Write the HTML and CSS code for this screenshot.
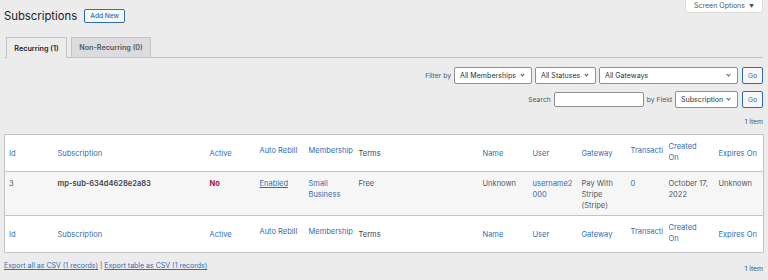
FILE: index.html
```html
<!DOCTYPE html>
<html>
<head>
<meta charset="utf-8">
<link rel="stylesheet" href="styles.css">
</head>
<body>
<div class="wrap">
  <div class="screen-opts">Screen Options <span class="caret">▼</span></div>
  <div class="title-row">
    <h1 class="title">Subscriptions</h1>
    <a class="add-new">Add New</a>
  </div>
  <div class="tabs">
    <a class="tab active">Recurring (1)</a>
    <a class="tab">Non-Recurring (0)</a>
  </div>
  <div class="filters">
    <div class="frow">
      <span class="lbl">Filter by</span>
      <div class="sel w-mem">All Memberships<span class="chev"></span></div>
      <div class="sel w-stat">All Statuses<span class="chev"></span></div>
      <div class="sel w-gw">All Gateways<span class="chev"></span></div>
      <a class="go">Go</a>
    </div>
    <div class="frow">
      <span class="lbl">Search</span>
      <div class="inp"></div>
      <span class="lbl">by Field</span>
      <div class="sel w-field">Subscription<span class="chev"></span></div>
      <a class="go">Go</a>
    </div>
  </div>
  <div class="count">1 item</div>
  <table class="list">
    <colgroup>
      <col class="c-id"><col class="c-sub"><col class="c-act"><col class="c-ar"><col class="c-mem"><col class="c-terms"><col class="c-name"><col class="c-user"><col class="c-gw"><col class="c-tx"><col class="c-cr"><col class="c-ex">
    </colgroup>
    <thead>
      <tr>
        <th><a>Id</a></th>
        <th><a>Subscription</a></th>
        <th><a>Active</a></th>
        <th class="hi"><a>Auto Rebill</a></th>
        <th class="hi"><a>Membership</a></th>
        <th class="plain">Terms</th>
        <th><a>Name</a></th>
        <th><a>User</a></th>
        <th><a>Gateway</a></th>
        <th class="hi clip"><a>Transacti</a></th>
        <th class="two"><a>Created On</a></th>
        <th><a>Expires On</a></th>
      </tr>
    </thead>
    <tbody>
      <tr>
        <td>3</td>
        <td class="subid">mp-sub-634d4628e2a83</td>
        <td class="no">No</td>
        <td><a class="ul">Enabled</a></td>
        <td><a>Small Business</a></td>
        <td>Free</td>
        <td>Unknown</td>
        <td class="brk"><a>username2000</a></td>
        <td>Pay With Stripe (Stripe)</td>
        <td><a>0</a></td>
        <td>October 17, 2022</td>
        <td>Unknown</td>
      </tr>
    </tbody>
    <tfoot>
      <tr>
        <th><a>Id</a></th>
        <th><a>Subscription</a></th>
        <th><a>Active</a></th>
        <th class="hi"><a>Auto Rebill</a></th>
        <th class="hi"><a>Membership</a></th>
        <th class="plain">Terms</th>
        <th><a>Name</a></th>
        <th><a>User</a></th>
        <th><a>Gateway</a></th>
        <th class="hi clip"><a>Transacti</a></th>
        <th class="two"><a>Created On</a></th>
        <th><a>Expires On</a></th>
      </tr>
    </tfoot>
  </table>
  <div class="bottom">
    <div class="exports"><a>Export all as CSV (1 records)</a> | <a>Export table as CSV (1 records)</a></div>
    <div class="count2">1 item</div>
  </div>
</div>
</body>
</html>
```
FILE: styles.css
```css
* { box-sizing: border-box; }
html, body { margin: 0; padding: 0; }
body {
  background: #ececec;
  font-family: "Inter", "Liberation Sans", sans-serif;
  font-size: 7.5px;
  color: #50575e;
  width: 768px;
  height: 280px;
  overflow: hidden;
}
a { color: #2f6db3; text-decoration: none; }
.wrap { position: relative; padding: 0 5px 0 4px; }
.screen-opts {
  position: absolute;
  right: 5px;
  top: -2px;
  width: 78px;
  height: 15px;
  background: #fff;
  border: 1px solid #dcdcde;
  border-top: none;
  border-radius: 0 0 3px 3px;
  color: #50575e;
  font-size: 7px;
  display: flex;
  align-items: center;
  justify-content: center;
  padding-top: 1px;
  gap: 4px;
}
.screen-opts .caret { font-size: 5px; color: #50575e; }
.title-row { display: flex; align-items: center; height: 31px; padding-top: 1px; }
.title {
  margin: 0;
  font-size: 11.3px;
  font-weight: 400;
  color: #1d2327;
}
.add-new {
  margin-left: 7px;
  border: 1px solid #2f6db3;
  border-radius: 2px;
  background: #f6f7f7;
  font-size: 6.6px;
  font-weight: 500;
  height: 14px;
  width: 41px;
  display: flex;
  align-items: center;
  justify-content: center;
}
.tabs {
  display: flex;
  gap: 4px;
  padding-left: 2px;
  margin-top: 6px;
  border-bottom: 1px solid #c3c4c7;
  height: 21px;
}
.tab {
  border: 1px solid #c3c4c7;
  border-bottom: none;
  background: #dcdcde;
  color: #50575e;
  font-weight: 600;
  font-size: 7.2px;
  display: flex;
  align-items: center;
  justify-content: center;
  white-space: nowrap;
  height: 20px;
}
.tab.active {
  background: #ececec;
  color: #1d2327;
  height: 21px;
  margin-bottom: -1px;
  width: 61px;
}
.tab:not(.active) { width: 80px; }
.filters { display: flex; flex-direction: column; align-items: flex-end; gap: 7px; margin-top: 9px; }
.frow { display: flex; align-items: center; gap: 3px; }
.lbl { color: #50575e; font-size: 6.8px; }
.sel {
  height: 17px;
  background: #fff;
  border: 1px solid #8c8f94;
  border-radius: 2px;
  color: #2c3338;
  font-size: 7.1px;
  display: flex;
  align-items: center;
  padding-left: 5px;
  position: relative;
  white-space: nowrap;
}
.chev {
  position: absolute;
  right: 7px;
  top: 5px;
  width: 3px;
  height: 3px;
  border-right: 1px solid #50575e;
  border-bottom: 1px solid #50575e;
  transform: rotate(45deg);
}
.w-mem { width: 78px; }
.w-stat { width: 61px; }
.w-gw { width: 139px; }
.w-field { width: 63px; }
.inp { width: 90px; height: 15px; background: #fff; border: 1px solid #8c8f94; border-radius: 2px; }
.go {
  width: 21px;
  height: 17px;
  border: 1px solid #2f6db3;
  border-radius: 2px;
  background: #f6f7f7;
  display: flex;
  align-items: center;
  justify-content: center;
  font-size: 6.8px;
  margin-left: 1px;
}
.count { text-align: right; font-size: 6.8px; margin-top: 9px; height: 17px; color: #50575e; }
.list {
  width: 759px;
  border-collapse: collapse;
  table-layout: fixed;
  background: #fff;
  border: 1px solid #c3c4c7;
}
.c-id { width: 49px; } .c-sub { width: 152px; } .c-act { width: 50px; } .c-ar { width: 49px; }
.c-mem { width: 50px; } .c-terms { width: 124px; } .c-name { width: 50px; } .c-user { width: 49px; }
.c-gw { width: 49px; } .c-tx { width: 38px; } .c-cr { width: 50px; } .c-ex { width: 49px; }
th {
  text-align: left;
  font-weight: 400;
  font-size: 7.5px;
  height: 37px;
  padding: 0 4px;
  vertical-align: middle;
  white-space: nowrap;
  line-height: 11px;
}
thead th { border-bottom: 1px solid #c3c4c7; }
tfoot th { border-top: 1px solid #c3c4c7; height: 37px; }
th.hi a { position: relative; top: -3px; }
th.plain { color: #3c434a; }
th.clip { overflow: hidden; padding-right: 0; text-overflow: clip; }
th.two { white-space: normal; padding-bottom: 2px; }
th.two a { display: block; width: 30px; }
tbody td {
  background: #f6f6f6;
  vertical-align: top;
  padding: 6px 4px 4px;
  height: 42px;
  line-height: 11px;
  font-size: 7.5px;
}
td.brk { word-break: break-all; }
td.subid { color: #3c434a; font-weight: 600; }
td.no { color: #a02325; font-weight: 700; }
a.ul { text-decoration: underline; }
.bottom { display: flex; justify-content: space-between; margin-top: 8px; }
.exports { font-size: 7px; color: #50575e; }
.exports a { text-decoration: underline; }
.count2 { font-size: 6.8px; padding-top: 3px; }
```
